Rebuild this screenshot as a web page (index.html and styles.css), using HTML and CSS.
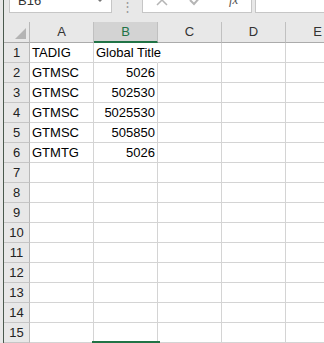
FILE: index.html
```html
<!DOCTYPE html>
<html lang="en">
<head>
    <meta charset="UTF-8">
    <title>Book1 - Excel</title>
    <link rel="stylesheet" href="styles.css">
</head>
<body>
    <div class="app">
        <!-- Строка формул -->
        <div class="toolbar">
            <div class="namebox">
                <span>B16</span>
                <span class="caret"></span>
            </div>
            <div class="grip">⋮</div>
            <div class="fbtns">
                <svg class="ico" width="14" height="14" viewBox="0 0 14 14"><path d="M2 2 L12 12 M12 2 L2 12" stroke="#b5b5b5" stroke-width="1.5" fill="none"/></svg>
                <svg class="ico" width="14" height="14" viewBox="0 0 14 14"><path d="M1 7 L5 11 L13 2" stroke="#b5b5b5" stroke-width="2" fill="none"/></svg>
                <span class="fx">fx</span>
            </div>
            <div class="formula"></div>
        </div>

        <!-- Лист -->
        <div class="sheet">
            <div class="corner"><span class="tri"></span></div>
            <div class="colhead">A</div>
            <div class="colhead active">B</div>
            <div class="colhead">C</div>
            <div class="colhead">D</div>
            <div class="colhead">E</div>

            <div class="rowhead">1</div>
            <div class="cell">TADIG</div>
            <div class="cell spill">Global Title</div>
            <div class="cell"></div><div class="cell"></div><div class="cell"></div>

            <div class="rowhead">2</div>
            <div class="cell">GTMSC</div>
            <div class="cell num">5026</div>
            <div class="cell"></div><div class="cell"></div><div class="cell"></div>

            <div class="rowhead">3</div>
            <div class="cell">GTMSC</div>
            <div class="cell num">502530</div>
            <div class="cell"></div><div class="cell"></div><div class="cell"></div>

            <div class="rowhead">4</div>
            <div class="cell">GTMSC</div>
            <div class="cell num">5025530</div>
            <div class="cell"></div><div class="cell"></div><div class="cell"></div>

            <div class="rowhead">5</div>
            <div class="cell">GTMSC</div>
            <div class="cell num">505850</div>
            <div class="cell"></div><div class="cell"></div><div class="cell"></div>

            <div class="rowhead">6</div>
            <div class="cell">GTMTG</div>
            <div class="cell num">5026</div>
            <div class="cell"></div><div class="cell"></div><div class="cell"></div>

            <div class="rowhead">7</div>
            <div class="cell"></div><div class="cell"></div><div class="cell"></div><div class="cell"></div><div class="cell"></div>
            <div class="rowhead">8</div>
            <div class="cell"></div><div class="cell"></div><div class="cell"></div><div class="cell"></div><div class="cell"></div>
            <div class="rowhead">9</div>
            <div class="cell"></div><div class="cell"></div><div class="cell"></div><div class="cell"></div><div class="cell"></div>
            <div class="rowhead">10</div>
            <div class="cell"></div><div class="cell"></div><div class="cell"></div><div class="cell"></div><div class="cell"></div>
            <div class="rowhead">11</div>
            <div class="cell"></div><div class="cell"></div><div class="cell"></div><div class="cell"></div><div class="cell"></div>
            <div class="rowhead">12</div>
            <div class="cell"></div><div class="cell"></div><div class="cell"></div><div class="cell"></div><div class="cell"></div>
            <div class="rowhead">13</div>
            <div class="cell"></div><div class="cell"></div><div class="cell"></div><div class="cell"></div><div class="cell"></div>
            <div class="rowhead">14</div>
            <div class="cell"></div><div class="cell"></div><div class="cell"></div><div class="cell"></div><div class="cell"></div>
            <div class="rowhead">15</div>
            <div class="cell"></div><div class="cell"></div><div class="cell"></div><div class="cell"></div><div class="cell"></div>
            <div class="rowhead">16</div>
            <div class="cell"></div><div class="cell selected"></div><div class="cell"></div><div class="cell"></div><div class="cell"></div>
        </div>
    </div>
</body>
</html>
```

FILE: styles.css
```css
html, body {
    margin: 0;
    padding: 0;
    height: 343px;
    overflow: hidden;
}

body {
    font-family: "Liberation Sans", Arial, sans-serif;
    font-size: 13px;
    color: #000;
    background-color: #e8e8e8;
}

.app {
    margin-left: 3px;
    border-left: 1px solid #4a5a4e;
    height: 343px;
    overflow: hidden;
}

/* Строка формул */
.toolbar {
    display: flex;
    align-items: flex-end;
    height: 13px;
    margin-bottom: 9px;
}

.namebox {
    display: flex;
    align-items: center;
    justify-content: space-between;
    box-sizing: border-box;
    width: 103px;
    height: 26px;
    margin-left: 5px;
    padding: 0 8px 0 8px;
    background: #fff;
    border: 1px solid #c6c6c6;
    color: #333;
}

.caret {
    width: 0;
    height: 0;
    border-left: 3px solid transparent;
    border-right: 3px solid transparent;
    border-top: 3px solid #777;
}

.grip {
    width: 30px;
    text-align: center;
    color: #999;
    line-height: 13px;
    margin-top: -6px;
}

.fbtns {
    display: flex;
    align-items: center;
    box-sizing: border-box;
    width: 110px;
    height: 26px;
    padding: 0 0 0 12px;
    background: #fff;
    border: 1px solid #c6c6c6;
}

.fbtns .ico {
    margin-right: 20px;
}

.fx {
    margin-left: 6px;
    font-family: "Liberation Serif", serif;
    font-style: italic;
    color: #555;
}

.formula {
    flex: 1;
    box-sizing: border-box;
    height: 26px;
    margin-left: 3px;
    background: #fff;
    border: 1px solid #c6c6c6;
    border-right: none;
}

/* Лист */
.sheet {
    display: grid;
    grid-template-columns: 26px 64px 64px 64px 64px 64px;
    grid-template-rows: 21px;
    grid-auto-rows: 20px;
    background: #fff;
}

.sheet > div {
    box-sizing: border-box;
    white-space: nowrap;
}

.corner {
    position: relative;
    background: #e8e8e8;
    border-right: 1px solid #b8b8b8;
    border-bottom: 1px solid #ababab;
}

.tri {
    position: absolute;
    right: 3px;
    bottom: 3px;
    width: 0;
    height: 0;
    border-left: 11px solid transparent;
    border-bottom: 11px solid #b4b4b4;
}

.colhead {
    background: #e8e8e8;
    border-right: 1px solid #c0c0c0;
    border-bottom: 1px solid #ababab;
    text-align: center;
    line-height: 20px;
    color: #333;
}

.colhead.active {
    background: #d3d3d3;
    color: #217346;
    border-bottom: 2px solid #217346;
}

.rowhead {
    background: #e8e8e8;
    border-right: 1px solid #b8b8b8;
    border-bottom: 1px solid #c6c6c6;
    text-align: center;
    line-height: 19px;
    color: #222;
}

.cell {
    border-right: 1px solid #d4d4d4;
    border-bottom: 1px solid #d4d4d4;
    padding: 0 2px;
    line-height: 19px;
}

.cell.spill {
    border-right-color: transparent;
}

.cell.num {
    text-align: right;
}

.cell.selected {
    outline: 2px solid #217346;
    outline-offset: 0;
}
```
